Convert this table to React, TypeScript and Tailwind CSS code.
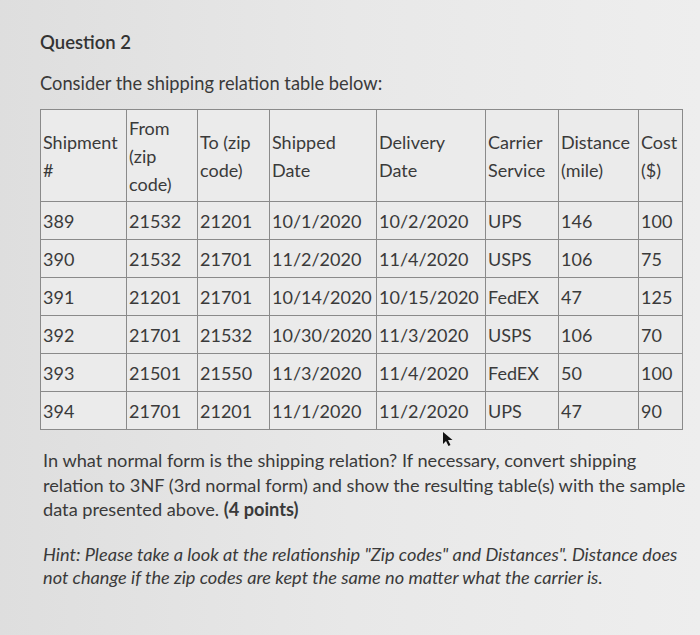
import React from "react";

const headers: string[][] = [
  ["Shipment", "#"],
  ["From", "(zip", "code)"],
  ["To (zip", "code)"],
  ["Shipped", "Date"],
  ["Delivery", "Date"],
  ["Carrier", "Service"],
  ["Distance", "(mile)"],
  ["Cost", "($)"],
];

const widths = ["w-[86px]", "w-[71px]", "w-[72px]", "w-[107px]", "w-[109px]", "w-[73px]", "w-[80px]", "w-[44px]"];

const rows: string[][] = [
  ["389", "21532", "21201", "10/1/2020", "10/2/2020", "UPS", "146", "100"],
  ["390", "21532", "21701", "11/2/2020", "11/4/2020", "USPS", "106", "75"],
  ["391", "21201", "21701", "10/14/2020", "10/15/2020", "FedEX", "47", "125"],
  ["392", "21701", "21532", "10/30/2020", "11/3/2020", "USPS", "106", "70"],
  ["393", "21501", "21550", "11/3/2020", "11/4/2020", "FedEX", "50", "100"],
  ["394", "21701", "21201", "11/1/2020", "11/2/2020", "UPS", "47", "90"],
];

export default function App() {
  return (
    <div
      className="relative w-[700px] h-[635px] overflow-hidden bg-linear-to-r from-[#dedede] via-[#e8e8e8] to-[#eeeeee] text-[#3a3a3a]"
      style={{ fontFamily: "Lato, 'Open Sans', sans-serif" }}
    >
      <div className="pl-[40px] pt-[29px]">
        <div className="text-[18.5px] font-semibold leading-[26px] text-[#333]">Question 2</div>
        <div className="mt-[15px] text-[18.3px] leading-[26px]">Consider the shipping relation table below:</div>
        <table className="mt-[13px] border-collapse border border-[#8a8a8a] text-[18px] leading-[28px] bg-[#ebebeb]">
          <thead>
            <tr className="h-[92px]">
              {headers.map((h, i) => (
                <th
                  key={i}
                  className={`${widths[i]} border border-[#8a8a8a] px-[2px] text-left align-middle font-normal whitespace-nowrap`}
                >
                  {h.map((line, j) => (
                    <div key={j}>{line}</div>
                  ))}
                </th>
              ))}
            </tr>
          </thead>
          <tbody>
            {rows.map((r, ri) => (
              <tr key={ri} className="h-[38px]">
                {r.map((c, ci) => (
                  <td
                    key={ci}
                    className={`${widths[ci]} border border-[#8a8a8a] px-[2px] align-middle whitespace-nowrap`}
                  >
                    {c}
                  </td>
                ))}
              </tr>
            ))}
          </tbody>
        </table>
        <div className="mt-[18px] pl-[3px] text-[18.2px] leading-[24.5px] whitespace-nowrap">
          In what normal form is the shipping relation? If necessary, convert shipping
          <br />
          relation to 3NF (3rd normal form) and show the resulting table(s) with the sample
          <br />
          data presented above. <b className="font-bold">(4 points)</b>
        </div>
        <div className="mt-[21px] pl-[3px] text-[18.2px] leading-[23px] italic whitespace-nowrap">
          Hint: Please take a look at the relationship "Zip codes" and Distances". Distance does
          <br />
          not change if the zip codes are kept the same no matter what the carrier is.
        </div>
      </div>
      <svg className="absolute left-[442px] top-[431px]" width="12" height="16" viewBox="0 0 12 16">
        <path d="M1 1 L1 13 L4 10 L6.5 15 L8.5 14 L6 9 L10.5 9 Z" fill="#111" />
      </svg>
    </div>
  );
}
